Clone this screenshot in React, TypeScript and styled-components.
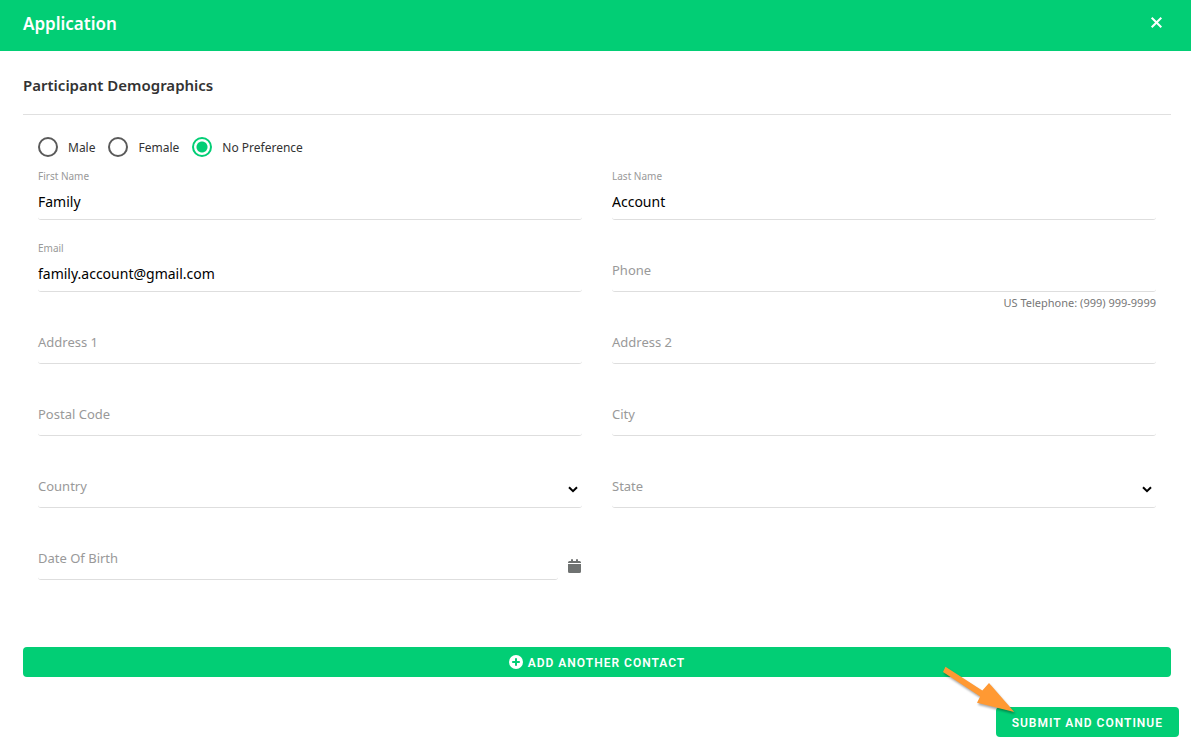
import React, { useId, useState } from "react";
import styled, { createGlobalStyle, css } from "styled-components";

const green = "#02ce75";

const GlobalStyle = createGlobalStyle`
  *, *::before, *::after { box-sizing: border-box; }
  body {
    margin: 0;
    background: #fff;
    color: #333;
    font-family: "Noto Sans", "Open Sans", sans-serif;
    font-size: 14px;
  }
  input, select, button { font: inherit; color: inherit; }
`;

const Header = styled.header`
  display: flex;
  align-items: center;
  justify-content: space-between;
  height: 51px;
  padding: 0 26px 4px 23px;
  background: ${green};
  color: #fff;
`;

const Title = styled.h1`
  margin: 0;
  font-size: 17px;
  line-height: 24px;
  font-weight: 600;
`;

const CloseButton = styled.button`
  display: flex;
  padding: 2px 2px 4px;
  border: 0;
  background: none;
  cursor: pointer;
`;

const Content = styled.main`
  padding: 0 20px 0 23px;
`;

const SectionTitle = styled.h2`
  margin: 0;
  padding: 22px 0 16px;
  border-bottom: 1px solid #e0e0e0;
  font-size: 15px;
  line-height: 25px;
  font-weight: 600;
`;

const Form = styled.div`
  padding: 20px 15px 0;
`;

const RadioGroup = styled.fieldset`
  display: flex;
  gap: 13px;
  height: 33px;
  margin: 0;
  padding: 2px 0 0;
  border: 0;
`;

const RadioLabel = styled.label`
  display: flex;
  align-items: flex-start;
  gap: 10px;
  height: 20px;
  font-size: 12px;
  line-height: 22px;
  cursor: pointer;
`;

const RadioInput = styled.input`
  appearance: none;
  width: 20px;
  height: 20px;
  margin: 0;
  border: 2px solid #5a5a5a;
  border-radius: 50%;
  &:checked {
    border-color: ${green};
    background: radial-gradient(circle, ${green} 5px, transparent 6px);
  }
`;

const Fields = styled.div`
  display: grid;
  grid-template-columns: 1fr 1fr;
  column-gap: 30px;
`;

const FieldCell = styled.div`
  height: 72px;
`;

const FieldBox = styled.div`
  display: grid;
  grid-template-rows: 16px 36px;
`;

const FieldLabel = styled.label<{ $raised: boolean }>`
  grid-column: 1;
  pointer-events: none;
  color: #999;
  ${({ $raised }) =>
    $raised
      ? css`
          grid-row: 1;
          font-size: 10px;
          line-height: 16px;
        `
      : css`
          grid-row: 1 / 3;
          align-self: end;
          padding-bottom: 12px;
          font-size: 13px;
          line-height: 20px;
          z-index: 1;
        `}
`;

const control = css`
  grid-column: 1;
  grid-row: 2;
  width: 100%;
  height: 36px;
  padding: 0;
  border: 0 solid transparent;
  border-bottom: 1px solid #dedede;
  border-radius: 3px;
  background: transparent;
  color: #000;
  outline: 0;
  &:focus { border-bottom-color: ${green}; }
`;

const TextInput = styled.input`
  ${control}
`;

const SelectInput = styled.select`
  ${control}
  appearance: none;
`;

const Chevron = styled.svg`
  grid-column: 1;
  grid-row: 2;
  justify-self: end;
  align-self: center;
  margin: 0 4px 2px 0;
  pointer-events: none;
`;

const Hint = styled.div`
  font-size: 11px;
  line-height: 22px;
  text-align: right;
  color: #777;
`;

const DateRow = styled.div`
  display: grid;
  grid-template-columns: 1fr 14px;
  align-items: end;
  gap: 10px;
`;

const CalendarButton = styled.button`
  display: flex;
  padding: 0 0 7px;
  border: 0;
  background: none;
  cursor: pointer;
`;

const SolidButton = styled.button<{ $wide?: boolean }>`
  display: flex;
  align-items: center;
  justify-content: center;
  gap: 5px;
  width: ${({ $wide }) => ($wide ? "100%" : "auto")};
  height: 30px;
  padding: 0 16px;
  border: 0;
  border-radius: 4px;
  background: ${green};
  color: #fff;
  font-family: Roboto, "Noto Sans", sans-serif;
  font-size: 12px;
  line-height: 20px;
  font-weight: 600;
  letter-spacing: 1px;
  text-transform: uppercase;
  white-space: nowrap;
  cursor: pointer;
`;

const ButtonText = styled.span`
  padding-top: 2px;
`;

const AddRow = styled.div`
  padding-top: 47px;
`;

const Footer = styled.footer`
  display: flex;
  justify-content: flex-end;
  padding: 30px 12px 11px;
`;

const SubmitWrap = styled.div`
  position: relative;
`;

const Arrow = styled.svg`
  position: absolute;
  left: -60px;
  top: -45px;
  pointer-events: none;
`;

type FieldProps = {
  label: string;
  initial?: string;
  type?: string;
  options?: string[];
  hint?: string;
};

function FieldControl({ label, initial = "", type = "text", options }: FieldProps) {
  const id = useId();
  const [value, setValue] = useState(initial);
  return (
    <FieldBox>
      <FieldLabel htmlFor={id} $raised={value !== ""}>{label}</FieldLabel>
      {options ? (
        <>
          <SelectInput id={id} value={value} onChange={(e) => setValue(e.target.value)}>
            <option value="" />
            {options.map((o) => <option key={o}>{o}</option>)}
          </SelectInput>
          <Chevron width="10" height="7" viewBox="0 0 10 7">
            <path d="M1 1.2 5 5.2 9 1.2" fill="none" stroke="#000" strokeWidth="2" />
          </Chevron>
        </>
      ) : (
        <TextInput id={id} type={type} value={value} onChange={(e) => setValue(e.target.value)} />
      )}
    </FieldBox>
  );
}

function Field(props: FieldProps) {
  return (
    <FieldCell>
      <FieldControl {...props} />
      {props.hint && <Hint>{props.hint}</Hint>}
    </FieldCell>
  );
}

const genders = ["Male", "Female", "No Preference"];

export default function App() {
  const [gender, setGender] = useState("No Preference");
  return (
    <>
      <GlobalStyle />
      <Header>
        <Title>Application</Title>
        <CloseButton aria-label="Close">
          <svg width="13" height="13" viewBox="0 0 13 13">
            <path d="M1.700 1.700 11.300 11.300M11.300 1.700 1.700 11.300" fill="none" stroke="#fff" strokeWidth="2" />
          </svg>
        </CloseButton>
      </Header>
      <Content>
        <SectionTitle>Participant Demographics</SectionTitle>
        <Form>
          <RadioGroup aria-label="Gender">
            {genders.map((g) => (
              <RadioLabel key={g}>
                <RadioInput type="radio" name="gender" checked={gender === g} onChange={() => setGender(g)} />
                {g}
              </RadioLabel>
            ))}
          </RadioGroup>
          <Fields>
            <Field label="First Name" initial="Family" />
            <Field label="Last Name" initial="Account" />
            <Field label="Email" type="email" initial="family.account@gmail.com" />
            <Field label="Phone" type="tel" hint="US Telephone: (999) 999-9999" />
            <Field label="Address 1" />
            <Field label="Address 2" />
            <Field label="Postal Code" />
            <Field label="City" />
            <Field label="Country" options={["United States", "Canada"]} />
            <Field label="State" options={["California", "New York", "Texas"]} />
            <FieldCell>
              <DateRow>
                <FieldControl label="Date Of Birth" />
                <CalendarButton aria-label="Choose date">
                  <svg width="14" height="14" viewBox="0 0 14 14" fill="#6f7271">
                    <path d="M3 1a1 1 0 0 1 2 0v1h3V1a1 1 0 0 1 2 0v1h1.500A1.500 1.500 0 0 1 13 3.500V4H0v-.5A1.500 1.500 0 0 1 1.500 2H3z" />
                    <path d="M0 5h13v7.500a1.500 1.500 0 0 1-1.500 1.500h-10A1.500 1.500 0 0 1 0 12.500z" />
                  </svg>
                </CalendarButton>
              </DateRow>
            </FieldCell>
          </Fields>
        </Form>
        <AddRow>
          <SolidButton $wide>
            <svg width="14" height="14" viewBox="0 0 14 14">
              <circle cx="7" cy="7" r="7" fill="#fff" />
              <path d="M7 3.2v7.6M3.2 7h7.6" stroke={green} strokeWidth="2" />
            </svg>
            <ButtonText>Add another contact</ButtonText>
          </SolidButton>
        </AddRow>
      </Content>
      <Footer>
        <SubmitWrap>
          <SolidButton><ButtonText>Submit and continue</ButtonText></SolidButton>
          <Arrow width="84" height="58" viewBox="0 0 84 58">
            <g style={{ filter: "drop-shadow(1px 2px 1px rgba(0,0,0,.35))" }}>
              <path d="M9.5 4.7 46.3 28.5 53 21 78.3 50 41 40.700 44.200 34.600 7 10z" fill="#ff9933" />
            </g>
          </Arrow>
        </SubmitWrap>
      </Footer>
    </>
  );
}
